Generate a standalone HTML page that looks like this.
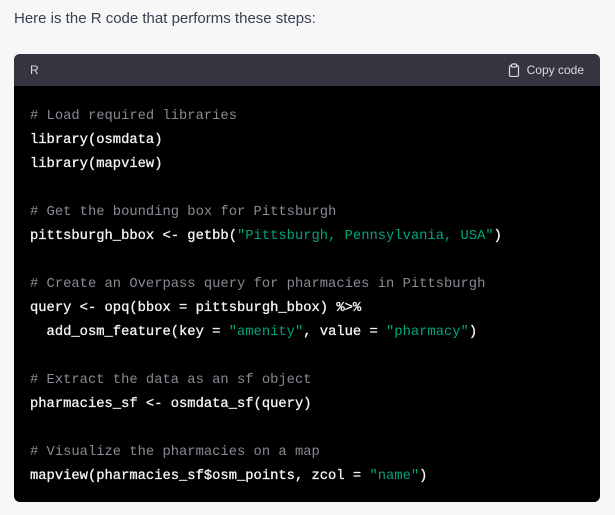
<html><head><style>
body{margin:0;background:#f7f7f8;width:615px;height:515px;overflow:hidden;font-family:"Liberation Sans",sans-serif}
.t{position:absolute;left:14px;top:10px;font-size:15px;color:#374151}
.box{position:absolute;left:14px;top:54px;width:586px;height:448px;background:#000;border-radius:6px;overflow:hidden}
.hd{height:32px;background:#343541;color:#d9d9e3;font-size:12px;position:relative}
.hd .l{position:absolute;left:16px;top:9px}
.hd .r{position:absolute;right:16px;top:9px}
pre{margin:0;position:absolute;left:16px;top:51px;font-family:"Liberation Mono",monospace;font-size:13.8px;line-height:24px;color:#f4f4f4;font-weight:normal;-webkit-text-stroke:0.3px #f4f4f4}
.c{color:#8a8a94;-webkit-text-stroke:0}.s{color:#00a67d;-webkit-text-stroke:0}
</style></head><body>
<div class="t">Here is the R code that performs these steps:</div>
<div class="box"><div class="hd"><span class="l">R</span><span class="r"><svg width="14" height="14" viewBox="0 0 14 14" style="vertical-align:-3px;margin-right:6px"><rect x="2.5" y="2.5" width="9" height="11" rx="1.5" fill="none" stroke="#d9d9e3" stroke-width="1.2"/><rect x="4.5" y="1" width="5" height="3" rx="1" fill="#343541" stroke="#d9d9e3" stroke-width="1.2"/></svg>Copy code</span></div>
<pre><span class="c"># Load required libraries</span>
library(osmdata)
library(mapview)

<span class="c"># Get the bounding box for Pittsburgh</span>
pittsburgh_bbox &lt;- getbb(<span class="s">"Pittsburgh, Pennsylvania, USA"</span>)

<span class="c"># Create an Overpass query for pharmacies in Pittsburgh</span>
query &lt;- opq(bbox = pittsburgh_bbox) %&gt;%
  add_osm_feature(key = <span class="s">"amenity"</span>, value = <span class="s">"pharmacy"</span>)

<span class="c"># Extract the data as an sf object</span>
pharmacies_sf &lt;- osmdata_sf(query)

<span class="c"># Visualize the pharmacies on a map</span>
mapview(pharmacies_sf$osm_points, zcol = <span class="s">"name"</span>)</pre></div>
</body></html>
